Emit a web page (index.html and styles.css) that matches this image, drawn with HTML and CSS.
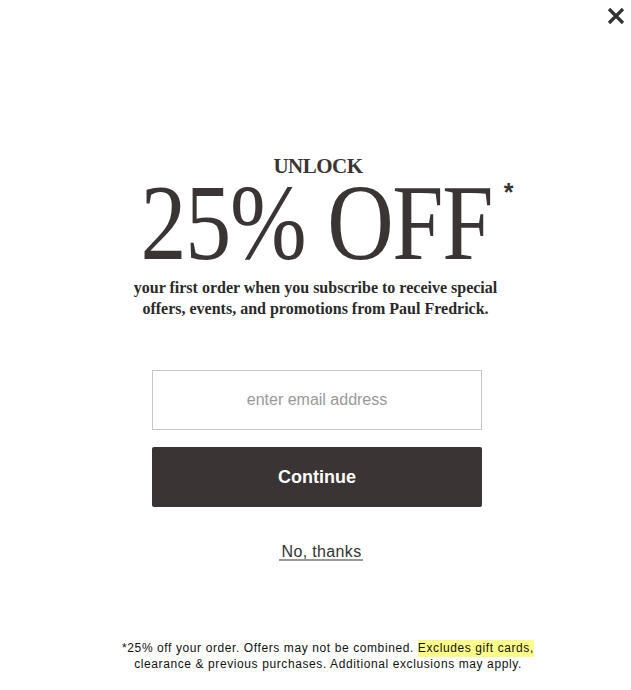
FILE: index.html
```html
<!DOCTYPE html>
<html lang="en">
<head>
  <meta charset="UTF-8">
  <meta name="viewport" content="width=device-width, initial-scale=1.0">
  <title>Unlock 25% Off</title>
  <link rel="stylesheet" href="styles.css">
</head>
<body>
  <!-- signup popup -->
  <div class="popup">
    <button class="close-btn" aria-label="Close">
      <svg width="18" height="18" viewBox="0 0 18 18">
        <path d="M2 2 L16 16 M16 2 L2 16" stroke="#333" stroke-width="3.2" stroke-linecap="butt"/>
      </svg>
    </button>

    <div class="offer">
      <div class="unlock">UNLOCK</div>
      <div class="headline"><span class="big">25% OFF</span><span class="star">*</span></div>
      <p class="intro">your first order when you subscribe to receive special<br>offers, events, and promotions from Paul Fredrick.</p>
    </div>

    <form class="signup" onsubmit="return false">
      <input type="email" class="email" placeholder="enter email address">
      <button type="submit" class="continue">Continue</button>
      <a href="#" class="no-thanks">No, thanks</a>
    </form>

    <p class="fine-print">*25% off your order. Offers may not be combined. <span class="mark">Excludes gift cards,</span><br>clearance &amp; previous purchases. Additional exclusions may apply.</p>
  </div>
</body>
</html>
```

FILE: styles.css
```css
body {
  margin: 0;
  background: #fff;
  font-family: 'Liberation Sans', Arial, sans-serif;
  color: #3a3534;
}

.popup {
  position: relative;
  width: 631px;
  height: 690px;
  display: flex;
  flex-direction: column;
  align-items: center;
  box-sizing: border-box;
  padding-top: 154px;
}

.close-btn {
  position: absolute;
  top: 7px;
  right: 6px;
  width: 18px;
  height: 18px;
  padding: 0;
  border: none;
  background: none;
  cursor: pointer;
}

.close-btn svg {
  display: block;
}

.offer {
  display: flex;
  flex-direction: column;
  align-items: center;
  font-family: 'Liberation Serif', 'Times New Roman', serif;
}

.unlock {
  font-size: 21px;
  font-weight: bold;
  line-height: 24px;
  letter-spacing: -0.5px;
  margin-left: 5px;
}

.headline {
  position: relative;
  margin-left: 2px;
}

/* the big number is a narrow display serif, so squeeze Times a bit */
.big {
  display: inline-block;
  font-size: 107px;
  line-height: 90px;
  letter-spacing: -1.5px;
  transform: scaleX(0.86);
  margin: 0 -28px;
}

.star {
  position: absolute;
  top: 5px;
  left: 100%;
  margin-left: 11px;
  font-family: 'Liberation Sans', Arial, sans-serif;
  font-size: 25px;
  line-height: 18px;
  font-weight: bold;
}

.intro {
  margin: 9px 0 0;
  font-size: 16px;
  font-weight: bold;
  line-height: 21px;
  text-align: center;
  color: #2a2a2a;
}

.signup {
  display: flex;
  flex-direction: column;
  align-items: center;
  margin-top: 51px;
  margin-left: 3px;
}

.email {
  width: 330px;
  height: 60px;
  box-sizing: border-box;
  border: 1px solid #c6c6c6;
  border-radius: 0;
  font-family: 'Liberation Sans', Arial, sans-serif;
  font-size: 16px;
  text-align: center;
  color: #333;
  outline: none;
}

.email::placeholder {
  color: #999;
}

.continue {
  width: 330px;
  height: 60px;
  margin-top: 17px;
  border: none;
  border-radius: 2px;
  background: #3a3534;
  color: #fff;
  font-family: 'Liberation Sans', Arial, sans-serif;
  font-size: 18px;
  font-weight: bold;
  cursor: pointer;
}

.no-thanks {
  margin: 37px 0 0 8px;
  padding: 0 2px 0 3px;
  font-size: 16px;
  line-height: 15px;
  letter-spacing: 0.35px;
  color: #333;
  text-decoration: none;
  border-bottom: 2px solid #999;
}

.fine-print {
  margin: auto 0 0;
  padding: 0 0 18px 25px;
  font-size: 12px;
  line-height: 16px;
  letter-spacing: 0.6px;
  text-align: center;
  color: #111;
}

.mark {
  background: #ffff8a;
  padding: 1px 0 2px;
}
```
